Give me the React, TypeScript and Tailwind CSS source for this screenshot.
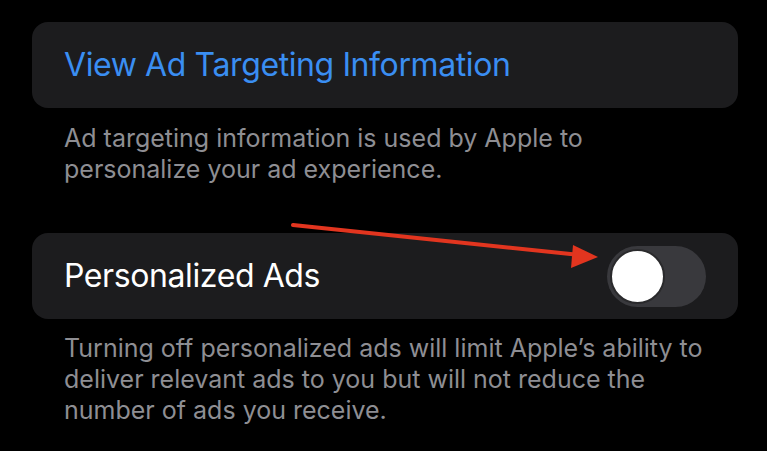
export default function App() {
  return (
    <div
      className="relative h-[451px] w-[767px] overflow-hidden bg-black px-[32px] pt-[22px] text-white"
      style={{ fontFamily: 'Inter, "Noto Sans", sans-serif' }}
    >
      <div className="flex h-[86px] w-[706px] items-center rounded-[16px] bg-[#1c1c1e] px-[32px]">
        <span className="text-[32px] leading-none tracking-[-0.4px] text-[#3a8ef2]">
          View Ad Targeting Information
        </span>
      </div>

      <div className="mt-[15px] px-[32px] text-[25px] leading-[31px] text-[#8e8e93]">
        <span className="block">Ad targeting information is used by Apple to</span>
        <span className="block">personalize your ad experience.</span>
      </div>

      <div className="mt-[48px] flex h-[86px] w-[706px] items-center justify-between rounded-[16px] bg-[#1c1c1e] pl-[32px] pr-[32px]">
        <span className="text-[32px] leading-none tracking-[-0.4px] text-white">
          Personalized Ads
        </span>
        <div className="flex h-[61px] w-[99px] items-center rounded-full bg-[#39393d] px-[3px]">
          <div className="h-[55px] w-[55px] rounded-full border-2 border-[#2a2a2c] bg-white" />
        </div>
      </div>

      <div className="mt-[14px] px-[32px] text-[25px] leading-[31px] text-[#8e8e93]">
        <span className="block">Turning off personalized ads will limit Apple’s ability to</span>
        <span className="block">deliver relevant ads to you but will not reduce the</span>
        <span className="block">number of ads you receive.</span>
      </div>

      {/* annotation arrow drawn over the screenshot */}
      <svg
        className="pointer-events-none absolute left-0 top-0"
        width="767"
        height="451"
        viewBox="0 0 767 451"
      >
        <line x1="293" y1="225" x2="580" y2="255" stroke="#e2351f" strokeWidth="4" strokeLinecap="round" />
        <polygon points="598,257 573,245 571,268" fill="#e2351f" />
      </svg>
    </div>
  );
}
